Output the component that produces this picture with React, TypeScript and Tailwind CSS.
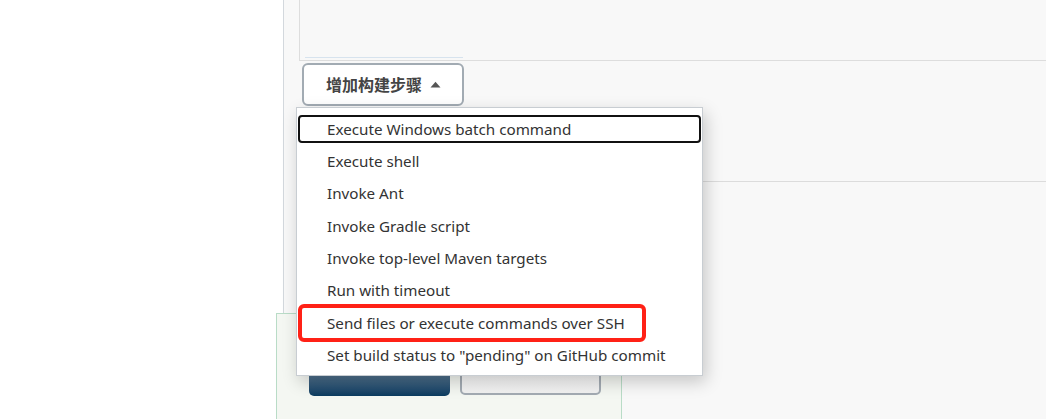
import React from 'react';

const items = [
  'Execute Windows batch command',
  'Execute shell',
  'Invoke Ant',
  'Invoke Gradle script',
  'Invoke top-level Maven targets',
  'Run with timeout',
  'Send files or execute commands over SSH',
  'Set build status to "pending" on GitHub commit',
];

export default function App() {
  return (
    <div
      className="relative w-[1046px] h-[419px] overflow-hidden bg-white flex"
      style={{ fontFamily: '"Noto Sans", "Noto Sans CJK SC", sans-serif' }}
    >
      {/* left blank column */}
      <div className="w-[283px] shrink-0 bg-white" />

      {/* main config area */}
      <div className="relative flex-1 border-l border-[#d3d8dd] bg-[#f8f8f8]">
        <div className="ml-[15px] border-b border-[#dcdcdc]">
          <div className="h-[61px] border-l border-b border-[#dddddd] bg-[#f8f8f8] flex items-end pl-[5px]">
            <div className="w-[158px] h-[1px] mb-[2px] bg-[#d7e3ee]" />
          </div>
          <div className="h-[120px] pt-[2px] pl-[3px]">
            <button className="h-[43px] w-[162px] rounded-[6px] border-2 border-[#a2abb3] bg-white flex items-center pl-[22px] gap-[8px] text-[16px] font-semibold text-[#444]">
              <span>增加构建步骤</span>
              <svg width="11" height="7" viewBox="0 0 11 7">
                <path d="M0.5 6.5 L5.5 0.8 L10.5 6.5 Z" fill="#555" />
              </svg>
            </button>
          </div>
        </div>

        {/* dropdown menu */}
        <div className="absolute left-[12px] top-[107px] w-[407px] z-20 bg-white border border-[#c8cdd2] shadow-[3px_6px_16px_rgba(0,0,0,0.2)] pt-[5px] pb-[3px]">
          {items.map((label, i) => (
            <div key={label} className="h-[32.35px] px-[1px] py-[2px]">
              <div
                className={
                  'h-full flex items-center pl-[27px] text-[15.2px] text-[#333] rounded-[4px] border-2 ' +
                  (i === 0 ? 'border-[#111]' : 'border-transparent')
                }
              >
                {label}
              </div>
            </div>
          ))}
          {/* annotation highlight */}
          <div className="absolute left-[1px] top-[196px] w-[348px] h-[38px] rounded-[6px] border-[4px] border-[#ff2116] pointer-events-none" />
        </div>
      </div>

      {/* sticky save/apply bar, buttons mostly covered by the menu */}
      <div className="absolute left-[276px] top-[313px] w-[346px] h-[120px] z-10 border border-[#b9dcc7] bg-[#f4f7f2] pt-[36px] pl-[32px] flex items-start gap-[10px]">
        <button aria-label="保存" className="h-[46px] w-[141px] rounded-[5px] bg-gradient-to-b from-[#a3b6c4] to-[#0a3c60]" />
        <button aria-label="应用" className="h-[45px] w-[141px] rounded-[5px] border-2 border-[#a3abb3] bg-gradient-to-b from-white to-[#f1f1f1]" />
      </div>
    </div>
  );
}
